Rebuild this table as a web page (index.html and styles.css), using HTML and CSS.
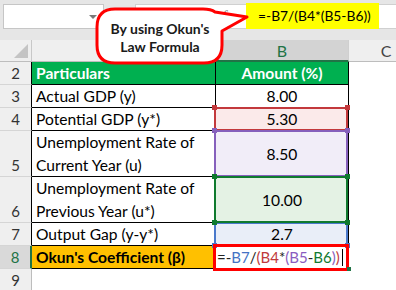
FILE: index.html
```html
<!DOCTYPE html>
<html>
<head>
<meta charset="utf-8">
<link rel="stylesheet" href="styles.css">
</head>
<body>
<div class="app">
  <div class="bar">
    <div class="namebox"><span class="caret"></span></div>
    <div class="fbar">
      <span class="fx"><span class="fx-f">f</span><span class="fx-x">x</span></span>
      <span class="ftext">=-B7/(B4*(B5-B6))</span>
    </div>
  </div>

  <div class="sheet">
    <div class="corner"><span class="tri"></span></div>
    <div class="ch"></div>
    <div class="ch sel">B</div>
    <div class="ch last">C</div>

    <div class="rh t">2</div>
    <div class="c t hd">Particulars</div>
    <div class="c t hd ctr">Amount (%)</div>
    <div class="c"></div>

    <div class="rh t">3</div>
    <div class="c t">Actual GDP (y)</div>
    <div class="c t ctr">8.00</div>
    <div class="c"></div>

    <div class="rh t">4</div>
    <div class="c t">Potential GDP (y*)</div>
    <div class="c t ctr ref red">5.30<span class="box"><i class="h tl"></i><i class="h tr"></i><i class="h bl"></i><i class="h br"></i></span></div>
    <div class="c"></div>

    <div class="rh t">5</div>
    <div class="c t wrap">Unemployment Rate of<br>Current Year (u)</div>
    <div class="c t ctr ref purple">8.50<span class="box"><i class="h tl"></i><i class="h tr"></i><i class="h bl"></i><i class="h br"></i></span></div>
    <div class="c"></div>

    <div class="rh t">6</div>
    <div class="c t wrap">Unemployment Rate of<br>Previous Year (u*)</div>
    <div class="c t ctr ref green">10.00<span class="box"><i class="h tl"></i><i class="h tr"></i><i class="h bl"></i><i class="h br"></i></span></div>
    <div class="c"></div>

    <div class="rh t">7</div>
    <div class="c t">Output Gap (y-y*)</div>
    <div class="c t ctr ref blue">2.7<span class="box"><i class="h tl"></i><i class="h tr"></i><i class="h bl"></i><i class="h br"></i></span></div>
    <div class="c"></div>

    <div class="rh t rsel">8</div>
    <div class="c t res">Okun's Coefficient (β)</div>
    <div class="c t edit"><span class="k">=-</span><span class="cb">B7</span><span class="k">/</span><span class="cr">(B4</span><span class="k">*</span><span class="cp">(B5</span><span class="k">-</span><span class="cg">B6</span><span class="cp">)</span><span class="cr">)</span><span class="cursor"></span><span class="active"></span><span class="fill"></span></div>
    <div class="c"></div>

    <div class="rh">9</div>
    <div class="c"></div>
    <div class="c"></div>
    <div class="c"></div>
  </div>

  <svg class="callout" width="396" height="80" viewBox="0 0 396 80">
    <path d="M115,9 H203 Q211,9 215,12 L247,17 L222,31 V45 Q222,63 204,63 H115 Q97,63 97,45 V27 Q97,9 115,9 Z" fill="#ffffff" stroke="#ff0000" stroke-width="3" stroke-linejoin="round"/>
    <text x="160" y="34" text-anchor="middle" class="ctext">By using Okun's</text>
    <text x="160" y="52" text-anchor="middle" class="ctext">Law Formula</text>
  </svg>
</div>
</body>
</html>
```

FILE: styles.css
```css
* { box-sizing: border-box; margin: 0; padding: 0; }

body {
  width: 396px;
  height: 290px;
  overflow: hidden;
  background: #ffffff;
  font-family: Lato, "Liberation Sans", sans-serif;
  color: #000;
}

.app {
  position: relative;
  width: 396px;
  height: 290px;
  overflow: hidden;
}

/* ---------- top bar ---------- */
.bar {
  height: 40px;
  background: #e6e6e6;
  display: flex;
  align-items: flex-start;
  padding-top: 4px;
  padding-left: 3px;
}

.namebox {
  width: 101px;
  height: 25px;
  background: #ffffff;
  border: 1px solid #c6c6c6;
  position: relative;
}

.caret {
  position: absolute;
  right: 6px;
  top: 10px;
  border-left: 4px solid transparent;
  border-right: 4px solid transparent;
  border-top: 4px solid #7a7a7a;
}

.fbar {
  margin-left: 31px;
  flex: 1;
  height: 25px;
  background: #ffffff;
  border: 1px solid #d0d0d0;
  border-right: 0;
  display: flex;
  align-items: center;
}

.fx {
  margin-left: 86px;
  width: 14px;
  color: #7a7a7a;
  font-family: "Liberation Serif", serif;
  font-style: italic;
  display: flex;
  align-items: baseline;
}

.fx-f { font-size: 15px; }
.fx-x { font-size: 10px; margin-left: 1px; position: relative; top: 2px; }

.ftext {
  align-self: flex-start;
  margin-top: -2px;
  margin-left: 10px;
  width: 133px;
  height: 26px;
  background: #ffff00;
  padding-left: 12px;
  font-size: 13.8px;
  line-height: 26px;
  color: #000;
  white-space: nowrap;
}

/* ---------- sheet ---------- */
.sheet {
  display: grid;
  grid-template-columns: 32px 184px 133px 74px;
  grid-template-rows: 22px 23px 23px 23px 46px 46px 23px 23px 23px;
  width: 423px;
}

.corner {
  background: #efefef;
  border-right: 1px solid #c8c8c8;
  border-bottom: 1px solid #bdbdbd;
  position: relative;
}

.tri {
  position: absolute;
  left: 14px;
  top: 4px;
  width: 14px;
  height: 14px;
  background: #c4c4c4;
  clip-path: polygon(100% 0, 100% 100%, 0 100%);
}

.ch {
  background: #efefef;
  border-right: 1px solid #cfcfcf;
  border-bottom: 1px solid #bdbdbd;
  color: #444;
  font-size: 16px;
  display: flex;
  align-items: center;
  justify-content: center;
}

.ch.sel {
  background: #d3d3d3;
  color: #217346;
  border-bottom: 2px solid #217346;
}

.ch.last { border-right: 0; }

.rh {
  background: #efefef;
  border-right: 1px solid #bdbdbd;
  border-bottom: 1px solid #d5d5d5;
  color: #333;
  font-size: 15px;
  line-height: 22px;
  display: flex;
  align-items: flex-end;
  justify-content: center;
}

.rh.t { border-right-color: #000; }

.rh.rsel {
  background: #d9d9d9;
  color: #217346;
  border-right: 2px solid #217346;
}

.c {
  border-right: 1px solid transparent;
  border-bottom: 1px solid transparent;
  font-size: 15.6px;
  line-height: 22px;
  padding-left: 4px;
  display: flex;
  align-items: flex-end;
  white-space: nowrap;
}

.c.t {
  border-right-color: #000;
  border-bottom-color: #000;
}

.c.wrap { display: block; line-height: 22.5px; }

.c.ctr {
  justify-content: center;
  align-items: center;
  padding-left: 0;
}

.hd {
  background: #00b050;
  color: #ffffff;
  font-weight: bold;
}

.res {
  background: #ffc000;
  font-weight: bold;
}

/* ---------- reference highlights ---------- */
.ref { position: relative; background: var(--bg); }
.ref.red { --c: #c3393c; --bg: #fbeaea; z-index: 1; }
.ref.purple { --c: #8660bc; --bg: #f1edf8; z-index: 2; }
.ref.green { --c: #0f7a2e; --bg: #e4f2e4; z-index: 4; }
.ref.blue { --c: #4a79cb; --bg: #e9eef8; z-index: 3; }

.box {
  position: absolute;
  top: -1px;
  left: -2px;
  right: 0;
  bottom: -1px;
  border: 2px solid var(--c);
}

.h {
  position: absolute;
  width: 5px;
  height: 5px;
  background: var(--c);
}
.h.tl { left: -4px; top: -4px; }
.h.tr { right: -4px; top: -4px; }
.h.bl { left: -4px; bottom: -4px; }
.h.br { right: -4px; bottom: -4px; }

/* ---------- edited cell ---------- */
.edit {
  position: relative;
  padding-left: 1px;
  z-index: 6;
  align-items: center;
  font-size: 15px;
}

.k { color: #222; }
.cb { color: #4472c4; }
.cr { color: #c0393b; }
.cp { color: #8a5cc0; }
.cg { color: #127a32; }

.cursor {
  display: inline-block;
  width: 1px;
  height: 17px;
  background: #000;
  margin-left: 2px;
}

.active {
  position: absolute;
  left: -3px;
  top: -2px;
  right: -1px;
  bottom: -3px;
  border: 3px solid #ff0000;
}

.fill {
  position: absolute;
  right: -3px;
  bottom: -3px;
  width: 4px;
  height: 4px;
  background: #217346;
}

/* ---------- callout ---------- */
.callout {
  position: absolute;
  left: 0;
  top: 0;
  z-index: 10;
}

.ctext {
  font-family: Lato, "Liberation Sans", sans-serif;
  font-weight: bold;
  font-size: 14px;
  fill: #1a1a1a;
}
```
